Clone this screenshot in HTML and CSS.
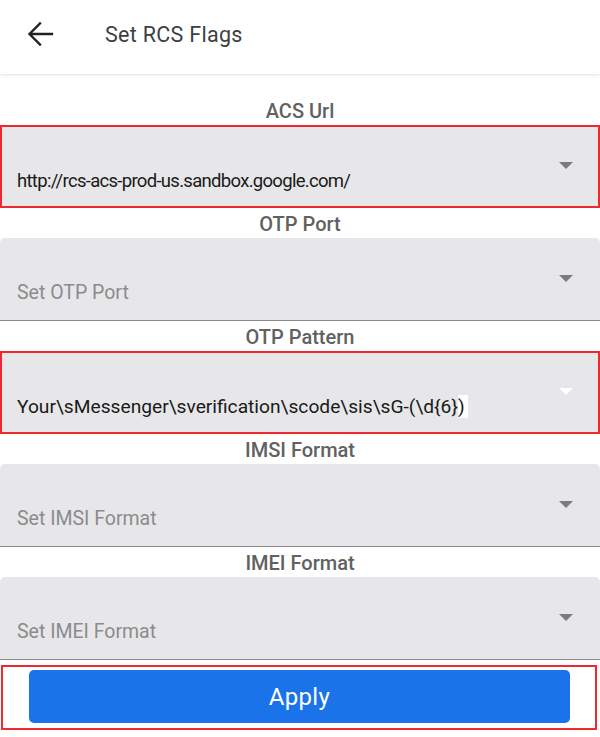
FILE: index.html
```html
<!DOCTYPE html>
<html lang="en">
<head>
<meta charset="utf-8">
<title>Set RCS Flags</title>
<link rel="stylesheet" href="styles.css">
</head>
<body>
<header class="appbar">
  <button class="back" aria-label="Back">
    <svg viewBox="0 0 24 24" width="36" height="36"><path d="M20 12H5.2M12 5l-7 7 7 7" fill="none" stroke="#202124" stroke-width="1.55" stroke-linecap="square"/></svg>
  </button>
  <h1 class="title">Set RCS Flags</h1>
</header>
<main class="form">
  <section class="group first">
    <div class="label">ACS Url</div>
    <div class="field marked">
      <span class="value url">http://rcs-acs-prod-us.sandbox.google.com/</span>
      <svg class="caret" viewBox="0 0 14 7" width="14" height="7"><path d="M0 0h14L7 7z" fill="#7b7b7d"/></svg>
    </div>
  </section>
  <section class="group">
    <div class="label">OTP Port</div>
    <div class="field">
      <span class="value placeholder">Set OTP Port</span>
      <svg class="caret" viewBox="0 0 14 7" width="14" height="7"><path d="M0 0h14L7 7z" fill="#7b7b7d"/></svg>
    </div>
  </section>
  <section class="group">
    <div class="label">OTP Pattern</div>
    <div class="field marked">
      <span class="value pattern">Your\sMessenger\sverification\scode\sis\sG-(\d{6}<span class="sel">)</span></span>
      <svg class="caret" viewBox="0 0 14 7" width="14" height="7"><path d="M0 0h14L7 7z" fill="#ffffff"/></svg>
    </div>
  </section>
  <section class="group">
    <div class="label">IMSI Format</div>
    <div class="field">
      <span class="value placeholder">Set IMSI Format</span>
      <svg class="caret" viewBox="0 0 14 7" width="14" height="7"><path d="M0 0h14L7 7z" fill="#7b7b7d"/></svg>
    </div>
  </section>
  <section class="group">
    <div class="label">IMEI Format</div>
    <div class="field">
      <span class="value placeholder">Set IMEI Format</span>
      <svg class="caret" viewBox="0 0 14 7" width="14" height="7"><path d="M0 0h14L7 7z" fill="#7b7b7d"/></svg>
    </div>
  </section>
  <div class="actions">
    <button class="apply">Apply</button>
  </div>
</main>
</body>
</html>
```
FILE: styles.css
```css
* { box-sizing: border-box; }
html, body { margin: 0; padding: 0; background: #ffffff; }
body {
  width: 600px;
  height: 737px;
  overflow: hidden;
  font-family: Roboto, "Noto Sans", "Liberation Sans", sans-serif;
}
.appbar {
  height: 74px;
  display: flex;
  align-items: center;
  background: #ffffff;
  box-shadow: 0 1px 2px rgba(0,0,0,0.06), 0 2px 4px rgba(0,0,0,0.05);
  position: relative;
  z-index: 1;
}
.back {
  width: 36px;
  height: 36px;
  margin-left: 22px;
  margin-top: -6px;
  padding: 0;
  border: 0;
  background: none;
  display: flex;
}
.title {
  margin: -6px 0 0 47px;
  font-size: 21.5px;
  font-weight: 400;
  color: #3c4043;
  letter-spacing: 0.3px;
}
.form {
  display: flex;
  flex-direction: column;
}
.group { display: flex; flex-direction: column; }
.group.first { margin-top: 21px; }
.label {
  height: 30px;
  padding-top: 3px;
  text-align: center;
  font-size: 20px;
  line-height: 26px;
  font-weight: 500;
  color: #616161;
}
.field {
  height: 83px;
  background: #e7e7e9;
  border-radius: 5px 5px 0 0;
  border-bottom: 1px solid #8a8a8c;
  display: flex;
  align-items: center;
  justify-content: space-between;
  padding: 0 27px 0 17px;
}
.field .value {
  align-self: flex-end;
  margin-bottom: 15px;
  font-size: 19.5px;
  line-height: 24px;
  color: #1a1a1a;
  white-space: nowrap;
}
.field .value.placeholder { color: #8b8b8d; }
.field .value.url { font-size: 18.5px; letter-spacing: -0.7px; }
.field .value.pattern { font-size: 19.2px; }
.field .caret { margin-top: -2px; flex: none; }
.field.marked {
  border-radius: 0;
  border: 2px solid #ee2a2f;
  padding-left: 15px;
  padding-right: 25px;
}
.field.marked .value { margin-bottom: 13px; }
.sel { background: #ffffff; padding-right: 3px; }
.actions {
  margin: 5px 3px 0 1px;
  height: 65px;
  border: 2px solid #ee2a2f;
  padding: 3px 25px 5px 26px;
  display: flex;
}
.apply {
  flex: 1;
  border: 0;
  border-radius: 5px;
  background: #1a73e8;
  color: #ffffff;
  font-family: Roboto, "Noto Sans", sans-serif;
  font-size: 24px;
  font-weight: 400;
  letter-spacing: 0.3px;
}
```
